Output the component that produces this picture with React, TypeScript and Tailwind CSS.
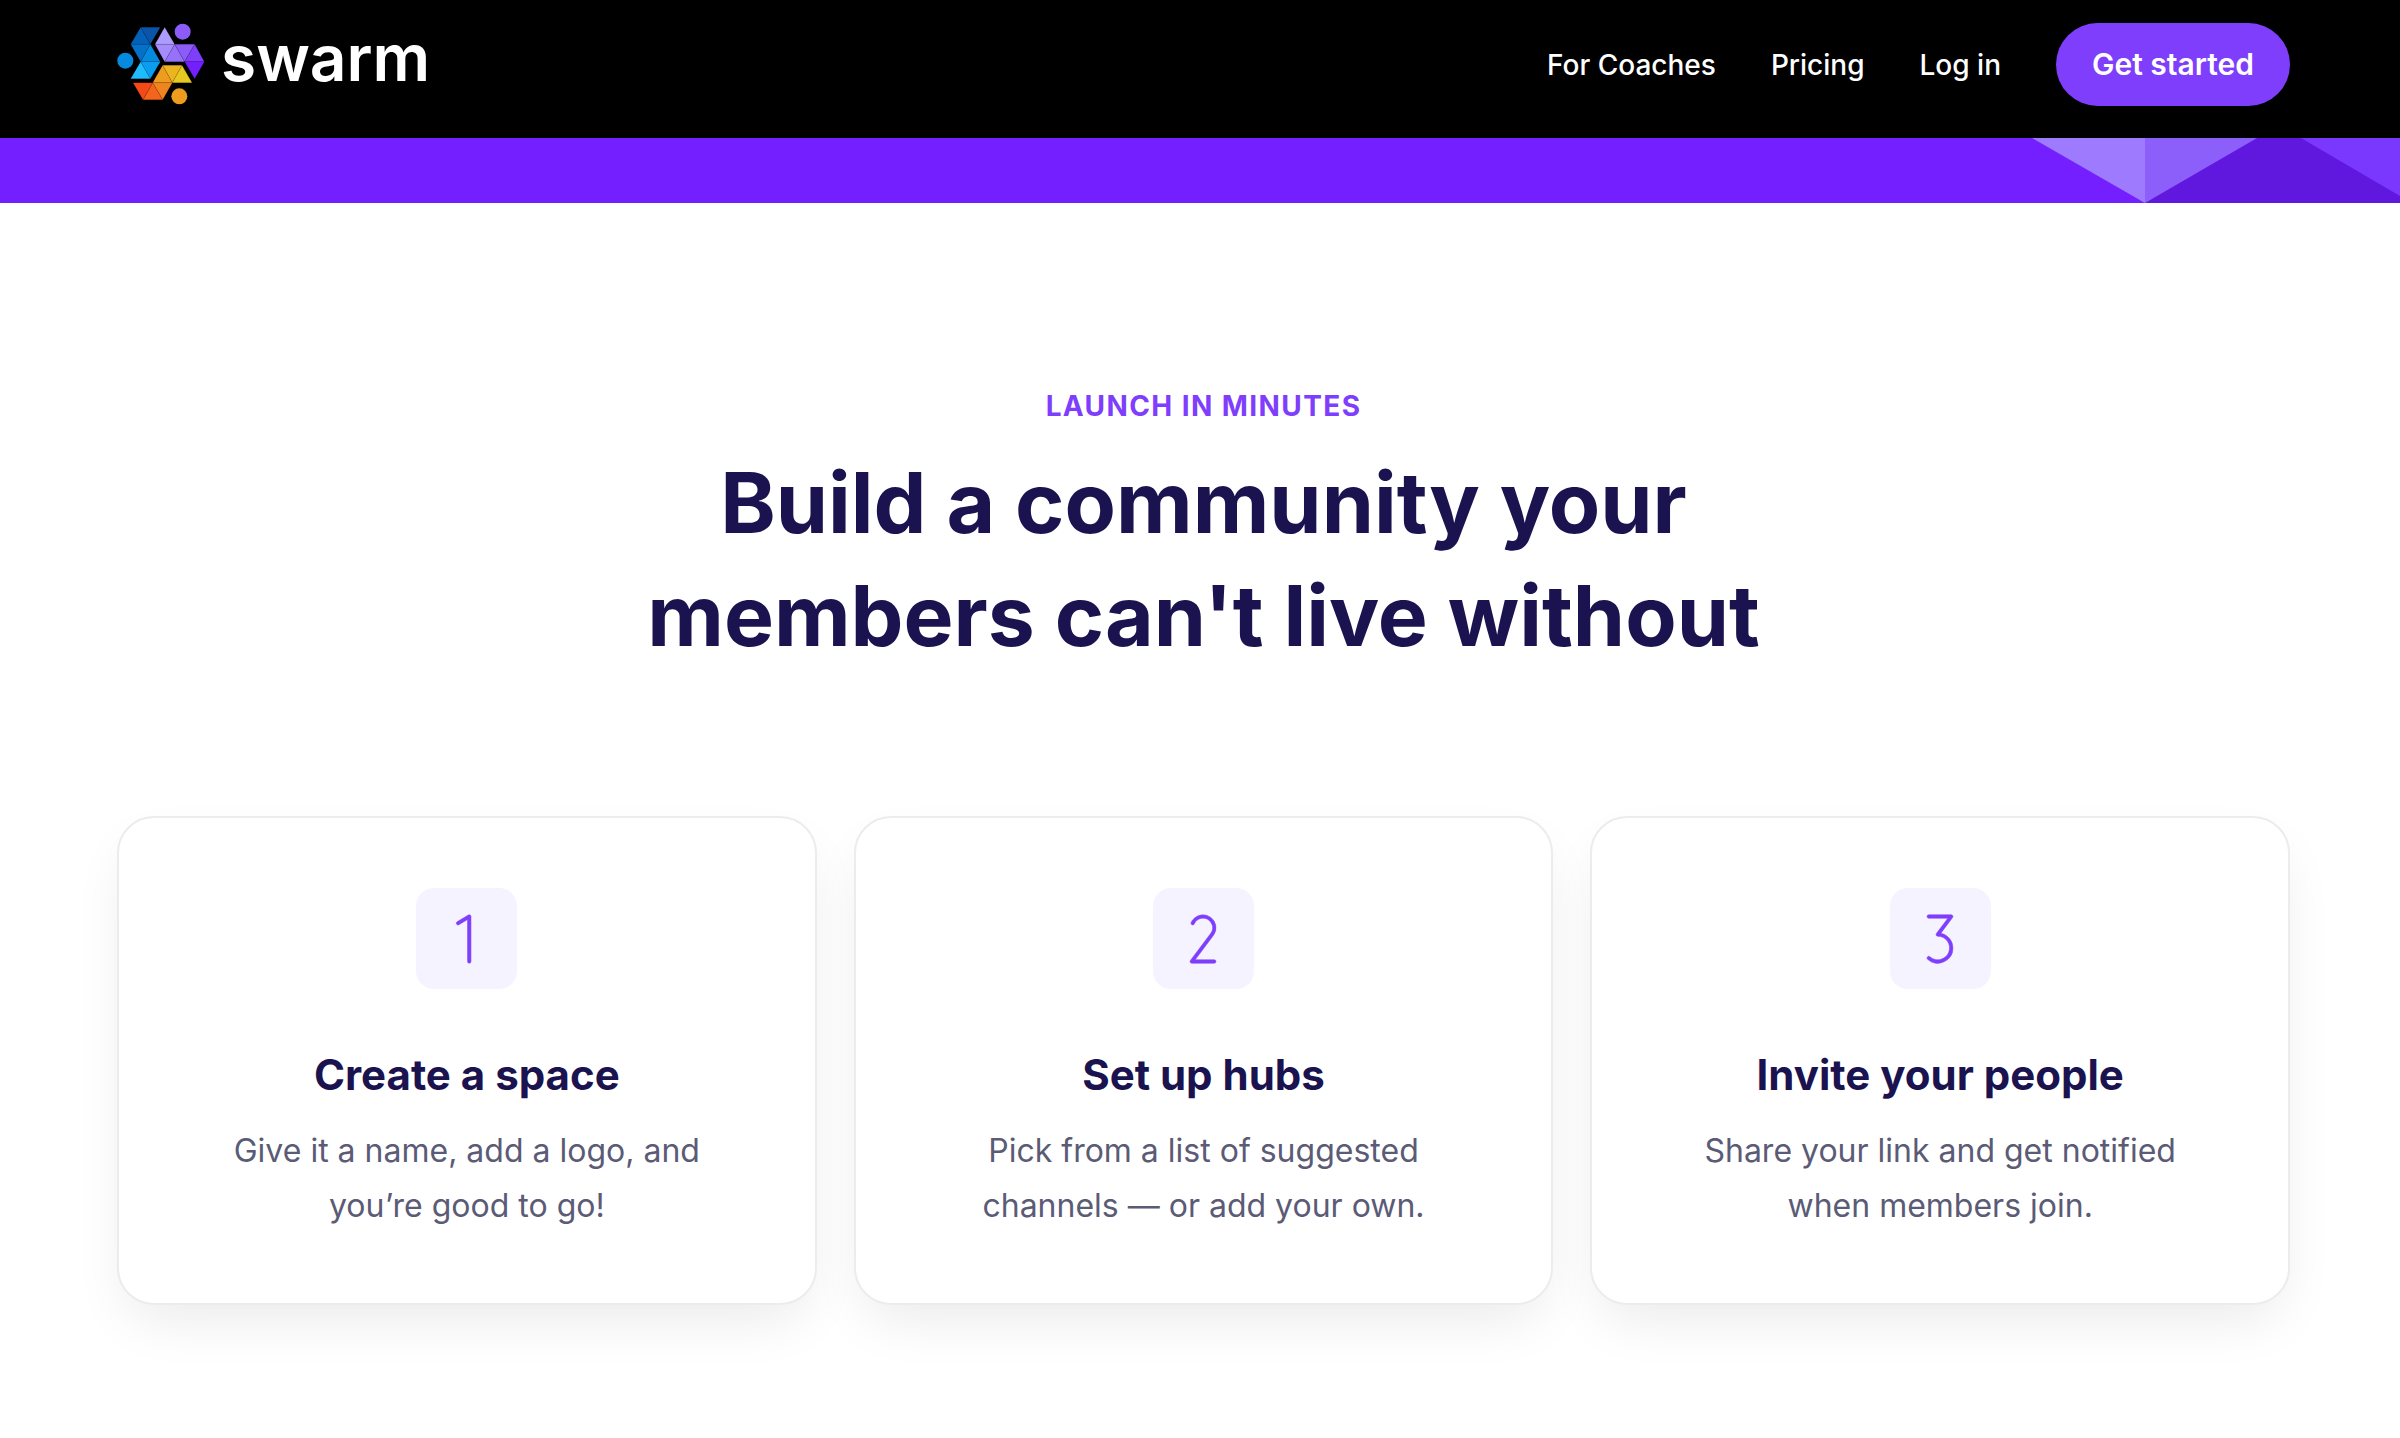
import { PiNumberOneLight, PiNumberThreeLight, PiNumberTwoLight } from 'react-icons/pi';

const links = ['For Coaches', 'Pricing', 'Log in'];

const steps = [
    {
        icon: PiNumberOneLight,
        title: 'Create a space',
        lines: ['Give it a name, add a logo, and', 'you’re good to go!'],
    },
    {
        icon: PiNumberTwoLight,
        title: 'Set up hubs',
        lines: ['Pick from a list of suggested', 'channels — or add your own.'],
    },
    {
        icon: PiNumberThreeLight,
        title: 'Invite your people',
        lines: ['Share your link and get notified', 'when members join.'],
    },
];

function LogoMark() {
    return (
        <svg viewBox="50 71 264 246" className="h-[82px] w-[88px]" aria-hidden="true">
            <g stroke="#000" strokeOpacity="0.25" strokeWidth="1">
                <path d="M121 84h59l-30 51z" fill="#0b55a8" />
                <path d="M121 84l29 51H91z" fill="#0560b8" />
                <path d="M91 135h59l-29 52z" fill="#0470c8" />
                <path d="M150 135l30 52h-59z" fill="#068ae0" />
                <path d="M121 187h59l-30 51z" fill="#0a9ef0" />
                <path d="M121 187l29 51H91z" fill="#1fbdff" />

                <path d="M193 84l30 51h-59z" fill="#ac9cfd" />
                <path d="M164 135h59l-30 52z" fill="#a58cfc" />
                <path d="M223 135l30 52h-60z" fill="#9672fa" />
                <path d="M223 135h60l-30 52z" fill="#8b5cf8" />
                <path d="M283 135l29 52h-59z" fill="#7e3efc" />
                <path d="M253 187h59l-29 51z" fill="#741fff" />

                <path d="M187 198h58l-29 52z" fill="#ecb41f" />
                <path d="M245 198l30 52h-59z" fill="#e8c820" />
                <path d="M187 198l29 52h-59z" fill="#ee9c20" />
                <path d="M157 250h59l-29 51z" fill="#ef8420" />
                <path d="M157 250l30 51h-59z" fill="#f4641c" />
                <path d="M98 250h59l-29 51z" fill="#f44a18" />
            </g>
            <circle cx="75" cy="184" r="24" fill="#058ae0" />
            <circle cx="247" cy="97" r="24" fill="#8b5cf8" />
            <circle cx="237" cy="291" r="24" fill="#ee9c20" />
        </svg>
    );
}

function Header() {
    return (
        <header className="flex items-start justify-between bg-black pt-[23px] pr-[110px] pb-8 pl-[117px] text-white">
            <a href="#" className="flex items-center gap-4">
                <LogoMark />
                <span className="pb-3 text-[64px] leading-[64px] font-semibold">swarm</span>
            </a>

            <nav className="flex items-center gap-[55px] text-[28px] font-medium">
                {links.map((link) => (
                    <a key={link} href="#">
                        {link}
                    </a>
                ))}
                <button
                    type="button"
                    className="h-[83px] rounded-full bg-[#7e3efc] px-9 text-[30px] font-semibold"
                >
                    Get started
                </button>
            </nav>
        </header>
    );
}

function Banner() {
    return (
        <div className="flex justify-end bg-[#741fff]">
            <svg viewBox="0 0 368 65" className="h-[65px] w-[368px]" aria-hidden="true">
                <path d="M225 0H368V65H112z" fill="#6018df" />
                <path d="M0 0h113v65z" fill="#9e7bfe" />
                <path d="M113 0h112L113 65z" fill="#8c5ffb" />
                <path d="M269 0h99v58z" fill="#7a38ff" />
            </svg>
        </div>
    );
}

function StepCard({ step }: { step: (typeof steps)[number] }) {
    const Icon = step.icon;

    return (
        <li className="flex flex-col items-center rounded-[37px] border-2 border-[#ececec] bg-white px-8 py-[70px] text-center shadow-[0_24px_56px_-12px_rgba(0,0,0,0.09)]">
            <div className="flex size-[101px] items-center justify-center rounded-[18px] bg-[#f5f3ff] text-[#7e3efc]">
                <Icon className="size-[72px]" strokeWidth={2} />
            </div>

            <h3 className="mt-[58px] text-[42px] leading-[56px] font-bold text-[#1a134f]">
                {step.title}
            </h3>

            <p className="mt-5 text-[32px] leading-[55px] text-[#5b5b76]">
                {step.lines[0]}
                <br />
                {step.lines[1]}
            </p>
        </li>
    );
}

export default function App() {
    return (
        <div className="bg-white font-['Inter',sans-serif]">
            <Header />
            <Banner />

            <main className="pt-[183px] pr-[110px] pb-[132px] pl-[117px]">
                <div className="text-center">
                    <p className="text-[28px] leading-10 font-bold tracking-wider text-[#7e3efc]">
                        LAUNCH IN MINUTES
                    </p>
                    <h2 className="mt-5 text-[84px] leading-[113px] font-bold text-[#1a134f]">
                        Build a community your
                        <br />
                        members can't live without
                    </h2>
                </div>

                <ul className="mt-[144px] grid grid-cols-3 gap-[37px]">
                    {steps.map((step) => (
                        <StepCard key={step.title} step={step} />
                    ))}
                </ul>
            </main>
        </div>
    );
}
